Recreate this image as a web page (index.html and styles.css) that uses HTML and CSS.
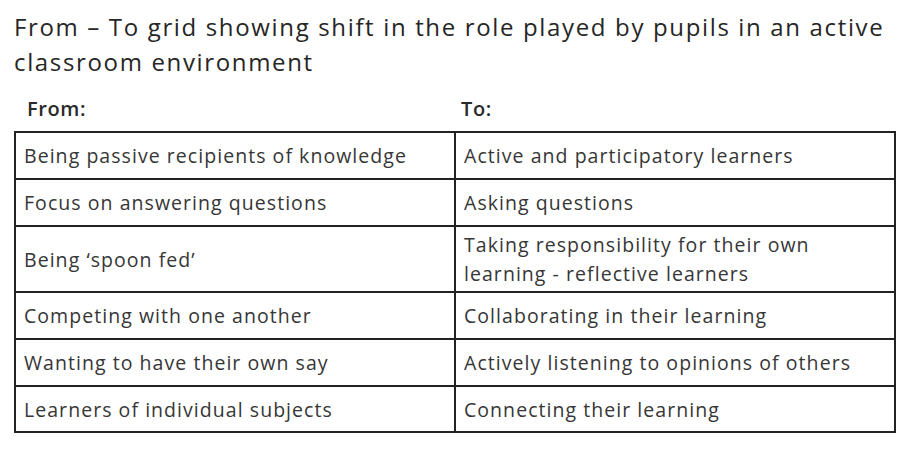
FILE: index.html
```html
<!DOCTYPE html>
<html>
<head>
<meta charset="utf-8">
<link rel="stylesheet" href="styles.css">
</head>
<body>
<div class="page">
  <h1 class="title">From – To grid showing shift in the role played by pupils in an active classroom environment</h1>
  <div class="grid">
    <div class="head head-from">From:</div>
    <div class="head head-to">To:</div>
    <div class="cell c1">Being passive recipients of knowledge</div>
    <div class="cell c2">Active and participatory learners</div>
    <div class="cell c1">Focus on answering questions</div>
    <div class="cell c2">Asking questions</div>
    <div class="cell c1 tall">Being ‘spoon fed’</div>
    <div class="cell c2 tall">Taking responsibility for their own learning - reflective learners</div>
    <div class="cell c1">Competing with one another</div>
    <div class="cell c2">Collaborating in their learning</div>
    <div class="cell c1">Wanting to have their own say</div>
    <div class="cell c2">Actively listening to opinions of others</div>
    <div class="cell c1 last">Learners of individual subjects</div>
    <div class="cell c2 last">Connecting their learning</div>
  </div>
</div>
</body>
</html>
```

FILE: styles.css
```css
html, body {
  margin: 0;
  padding: 0;
  background: #ffffff;
}
.page {
  padding: 9px 0 0 14px;
  width: 882px;
  font-family: "Open Sans", "Liberation Sans", sans-serif;
  color: #363636;
}
.title {
  margin: 0;
  font-size: 24px;
  font-weight: 400;
  line-height: 35px;
  letter-spacing: 1.65px;
  color: #262626;
  width: 905px;
}
.grid {
  margin-top: 15px;
  display: grid;
  grid-template-columns: 440px 442px;
  font-size: 19.5px;
  letter-spacing: 1.05px;
}
.head {
  height: 37px;
  font-size: 20px;
  font-weight: 600;
  padding-left: 13px;
  line-height: 30px;
  letter-spacing: 0.6px;
  color: #2a2a2a;
}
.head-to {
  padding-left: 7px;
}
.cell {
  display: flex;
  align-items: center;
  height: 47px;
  box-sizing: border-box;
  border-top: 2px solid #222;
  border-left: 2px solid #222;
  padding-left: 8px;
  padding-right: 14px;
  line-height: 29px;
}
.c2 {
  border-right: 2px solid #222;
}
.tall {
  height: 66px;
}
.last {
  border-bottom: 2px solid #222;
  height: 48px;
}
```
